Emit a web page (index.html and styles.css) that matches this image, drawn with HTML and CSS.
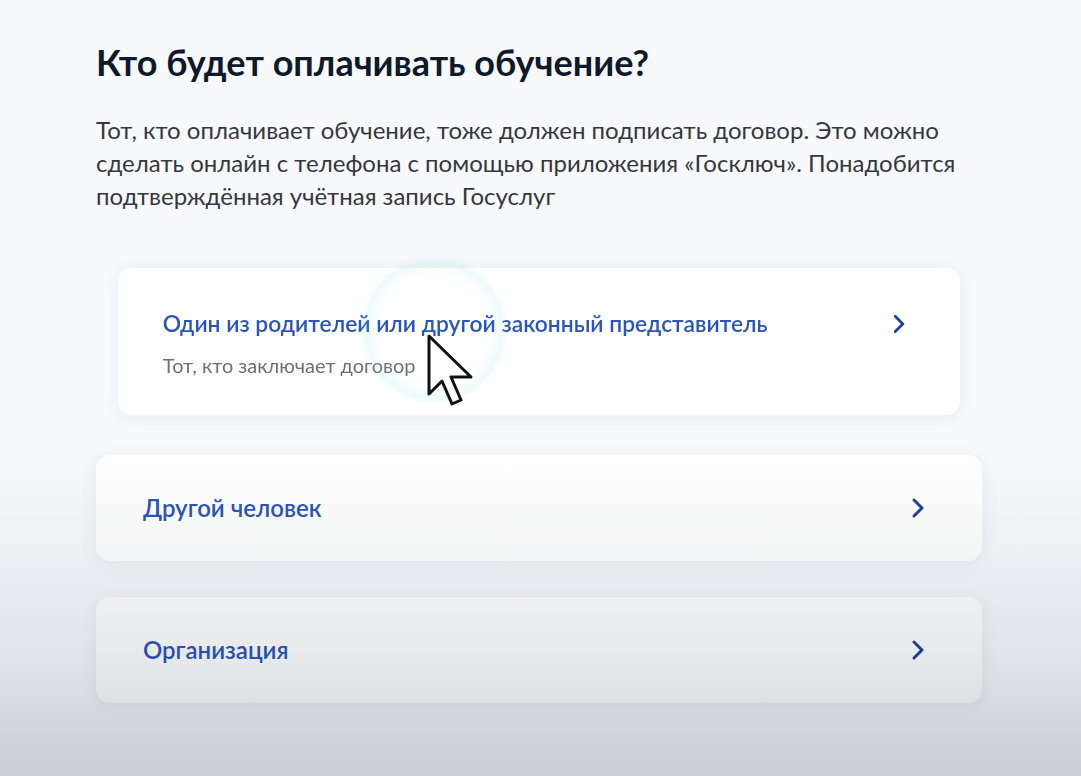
FILE: index.html
```html
<!DOCTYPE html>
<html lang="ru">
<head>
<meta charset="utf-8">
<title>Кто будет оплачивать обучение?</title>
<link rel="stylesheet" href="styles.css">
</head>
<body>
<main class="page">
  <h1 class="title">Кто будет оплачивать обучение?</h1>
  <p class="lead">Тот, кто оплачивает обучение, тоже должен подписать договор. Это можно сделать онлайн с телефона с помощью приложения «Госключ». Понадобится подтверждённая учётная запись Госуслуг</p>
  <div class="options">
    <a class="option option--pressed" href="#">
      <div class="option__body">
        <span class="option__title">Один из родителей или другой законный представитель</span>
        <span class="option__sub">Тот, кто заключает договор</span>
      </div>
      <svg class="chev" viewBox="0 0 14 22" width="14" height="22"><path d="M3 3 L11 11 L3 19" fill="none" stroke="#1c3fa3" stroke-width="3" stroke-linecap="round" stroke-linejoin="round"/></svg>
    </a>
    <a class="option" href="#">
      <div class="option__body">
        <span class="option__title">Другой человек</span>
      </div>
      <svg class="chev" viewBox="0 0 14 22" width="14" height="22"><path d="M3 3 L11 11 L3 19" fill="none" stroke="#1c3fa3" stroke-width="3" stroke-linecap="round" stroke-linejoin="round"/></svg>
    </a>
    <a class="option" href="#">
      <div class="option__body">
        <span class="option__title">Организация</span>
      </div>
      <svg class="chev" viewBox="0 0 14 22" width="14" height="22"><path d="M3 3 L11 11 L3 19" fill="none" stroke="#1c3fa3" stroke-width="3" stroke-linecap="round" stroke-linejoin="round"/></svg>
    </a>
  </div>
</main>
<div class="ripple"></div>
<svg class="cursor" viewBox="0 0 46 72" width="46" height="72"><path d="M2 2 V60 L15 47 L25 70 L34 66 L24 43 H44 Z" fill="#fff" stroke="#111" stroke-width="3" stroke-linejoin="round"/></svg>
<div class="shade"></div>
</body>
</html>
```

FILE: styles.css
```css
html, body {
  margin: 0;
  padding: 0;
}
body {
  background: #f7f9fc;
  font-family: "Lato", "Noto Sans", sans-serif;
  color: #0b1f33;
  width: 1081px;
  height: 776px;
  overflow: hidden;
  position: relative;
}
.page {
  padding: 40px 0 0 96px;
  width: 886px;
}
.title {
  margin: 0;
  font-size: 36px;
  line-height: 44px;
  font-weight: 700;
  color: #0e1a2b;
}
.lead {
  margin: 29px 0 0;
  font-size: 24px;
  line-height: 33px;
  color: #34383e;
  width: 886px;
}
.options {
  margin-top: 52px;
  display: flex;
  flex-direction: column;
  gap: 36px;
}
.option {
  display: flex;
  align-items: flex-start;
  justify-content: space-between;
  background: #fff;
  border-radius: 14px;
  box-shadow: 0 2px 18px rgba(30, 50, 90, 0.07);
  padding: 37px 57px 37px 47px;
  text-decoration: none;
}
.option--pressed {
  padding-top: 43px;
  padding-bottom: 38px;
  transform: scale(0.95);
}
.option__body {
  display: flex;
  flex-direction: column;
  gap: 14px;
}
.option__title {
  font-size: 24px;
  line-height: 32px;
  font-weight: 600;
  color: #2a55bb;
}
.option__sub {
  font-size: 21px;
  line-height: 28px;
  color: #6c7075;
}
.chev {
  display: block;
  margin-top: 5px;
}
.ripple {
  position: absolute;
  left: 368px;
  top: 264px;
  width: 132px;
  height: 132px;
  border-radius: 50%;
  box-shadow: 0 0 0 6px rgba(150, 225, 225, 0.16), inset 0 0 14px rgba(150, 225, 225, 0.22);
  filter: blur(2px);
  pointer-events: none;
}
.cursor {
  position: absolute;
  left: 427px;
  top: 334px;
  pointer-events: none;
}
.shade {
  position: absolute;
  inset: 0;
  background: linear-gradient(to bottom, rgba(20, 30, 50, 0) 0%, rgba(20, 30, 50, 0) 58%, rgba(20, 30, 50, 0.04) 70%, rgba(20, 30, 50, 0.1) 85%, rgba(20, 30, 50, 0.2) 100%);
  pointer-events: none;
}
```
